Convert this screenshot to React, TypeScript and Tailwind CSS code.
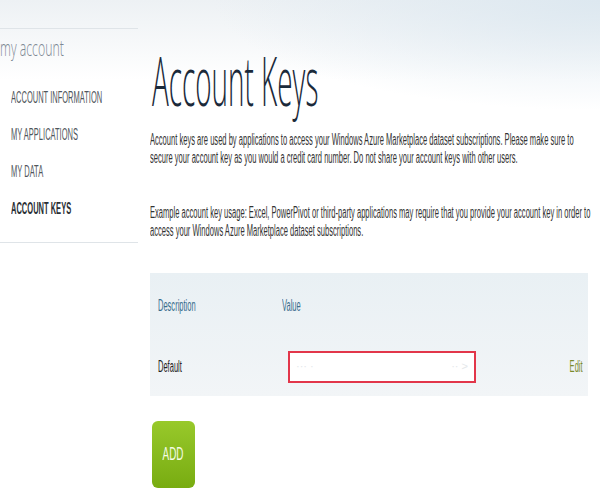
import React from 'react';

const sans = { fontFamily: '"Liberation Sans", Arial, sans-serif' };

function Sq({ children, className = '' }: { children: React.ReactNode; className?: string }) {
  // the screenshot is squeezed horizontally, so every text run is too
  return <span className={`inline-block whitespace-nowrap ${className}`}>{children}</span>;
}

const menu = [
  { label: 'ACCOUNT INFORMATION', active: false },
  { label: 'MY APPLICATIONS', active: false },
  { label: 'MY DATA', active: false },
  { label: 'ACCOUNT KEYS', active: true },
];

export default function App() {
  return (
    <div className="relative w-[600px] h-[500px] overflow-hidden bg-white" style={sans}>
      <div className="absolute inset-x-0 top-0 h-[80px] bg-gradient-to-b from-[#edf1f4] to-white" />
      <div className="absolute right-0 top-0 h-[120px] w-[420px] bg-[radial-gradient(ellipse_at_top_right,#dde8f0,transparent_65%)]" />

      <div className="relative flex h-full">
        {/* sidebar */}
        <aside className="w-[138px] shrink-0 pt-[28px]">
          <div className="border-t border-[#dfe4e8]" />
          <div className="h-[34px] pt-[6px] leading-[24px] text-[22px] font-light text-[#7d8893]" style={{ fontFamily: '"Open Sans", sans-serif' }}>
            <Sq className="origin-left scale-x-[0.56]">my account</Sq>
          </div>
          <nav className="flex flex-col pl-[11px] pt-[27px]">
            {menu.map((m) => (
              <div
                key={m.label}
                className={`h-[37px] leading-[16px] text-[16px] ${m.active ? 'font-bold text-[#2a2f35]' : 'text-[#50565c]'}`}
              >
                <Sq className="origin-left scale-x-[0.47]">{m.label}</Sq>
              </div>
            ))}
          </nav>
          <div className="mt-[4px] border-t border-[#dfe4e8]" />
        </aside>

        {/* main */}
        <main className="flex-1 pl-[12px] pt-[40px]">
          <h1
            className="h-[88px] text-[68px] leading-[80px] font-extralight text-[#1b2a3a]"
            style={{ fontFamily: '"Open Sans", sans-serif' }}
          >
            <Sq className="origin-left scale-x-[0.41] translate-x-[2px]">Account Keys</Sq>
          </h1>

          <div className="text-[16px] leading-[18px] text-[#333]">
            <div className="pt-[3px]">
              <div><Sq className="origin-left scale-x-[0.473]">Account keys are used by applications to access your Windows Azure Marketplace dataset subscriptions. Please make sure to</Sq></div>
              <div><Sq className="origin-left scale-x-[0.473]">secure your account key as you would a credit card number. Do not share your account keys with other users.</Sq></div>
            </div>
            <div className="pt-[37px]">
              <div><Sq className="origin-left scale-x-[0.473]">Example account key usage: Excel, PowerPivot or third-party applications may require that you provide your account key in order to</Sq></div>
              <div><Sq className="origin-left scale-x-[0.473]">access your Windows Azure Marketplace dataset subscriptions.</Sq></div>
            </div>
          </div>

          {/* keys table */}
          <div className="mt-[33px] w-[438px] h-[123px] bg-gradient-to-b from-[#e9f0f4] to-[#f2f5f7] text-[16px]">
            <div className="flex h-[62px] items-center pt-[3px] text-[#3a6d8c]">
              <div className="w-[132px] pl-[8px]"><Sq className="origin-left scale-x-[0.47]">Description</Sq></div>
              <div><Sq className="origin-left scale-x-[0.47]">Value</Sq></div>
            </div>
            <div className="flex h-[61px] items-center pt-[2px]">
              <div className="w-[138px] pl-[8px] text-[#222]"><Sq className="origin-left scale-x-[0.47]">Default</Sq></div>
              <div className="flex h-[32px] w-[188px] items-center justify-between border-2 border-[#e2364a] bg-white px-[6px] text-[11px] text-[#e4e7ea]">
                <span>··· ·</span>
                <span>·· &gt;</span>
              </div>
              <div className="flex-1 pr-[5px] text-right text-[#7b8a2c]">
                <Sq className="origin-right scale-x-[0.47]">Edit</Sq>
              </div>
            </div>
          </div>

          <button className="mt-[25px] ml-[2px] flex h-[67px] w-[43px] items-center justify-center rounded-[6px] bg-gradient-to-b from-[#98c92a] to-[#78ac10] text-[18px] text-[#f4fbe6]">
            <Sq className="origin-center scale-x-[0.55]">ADD</Sq>
          </button>
        </main>
      </div>
    </div>
  );
}
